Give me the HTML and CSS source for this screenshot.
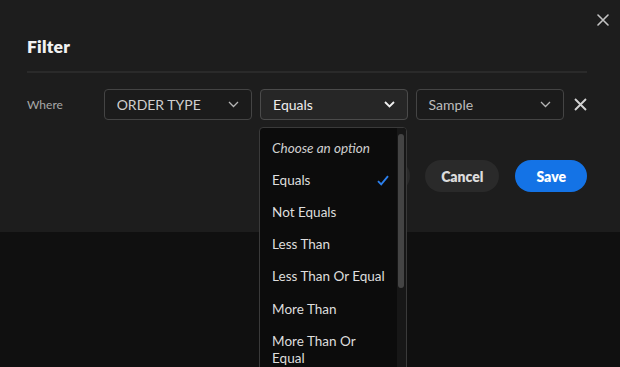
FILE: index.html
```html
<!DOCTYPE html>
<html lang="en">

<head>
    <meta charset="UTF-8">
    <title>Filter</title>
    <link rel="stylesheet" href="styles.css">
</head>

<body>
    <div class="modal">
        <button class="close" aria-label="Close">
            <svg width="12" height="12" viewBox="0 0 12 12"><path d="M1 1L11 11M11 1L1 11" stroke="#c4c4c4" stroke-width="1.6" stroke-linecap="round"/></svg>
        </button>
        <h1>Filter</h1>
        <div class="rule"></div>

        <div class="row">
            <span class="where">Where</span>
            <div class="select">
                <span>ORDER TYPE</span>
                <svg class="chev" width="11" height="7" viewBox="0 0 11 7"><path d="M1 1L5.5 5.5L10 1" fill="none" stroke="#b5b5b5" stroke-width="1.3"/></svg>
            </div>
            <div class="select open">
                <span>Equals</span>
                <svg class="chev" width="11" height="7" viewBox="0 0 11 7"><path d="M1 1L5.5 5.5L10 1" fill="none" stroke="#f0f0f0" stroke-width="1.8"/></svg>
                <div class="menu">
                    <ul>
                        <li class="placeholder">Choose an option</li>
                        <li class="selected">Equals
                            <svg class="check" width="12" height="11" viewBox="0 0 12 11"><path d="M1 6.2L4.2 9.4L11 1.2" fill="none" stroke="#2b7fec" stroke-width="1.9"/></svg>
                        </li>
                        <li>Not Equals</li>
                        <li>Less Than</li>
                        <li>Less Than Or Equal</li>
                        <li>More Than</li>
                        <li>More Than Or Equal</li>
                    </ul>
                    <div class="track"><div class="thumb"></div></div>
                </div>
            </div>
            <div class="select">
                <span class="dim">Sample</span>
                <svg class="chev" width="11" height="7" viewBox="0 0 11 7"><path d="M1 1L5.5 5.5L10 1" fill="none" stroke="#b5b5b5" stroke-width="1.3"/></svg>
            </div>
            <button class="remove" aria-label="Remove">
                <svg width="13" height="13" viewBox="0 0 13 13"><path d="M1 1L12 12M12 1L1 12" stroke="#d2d2d2" stroke-width="1.9"/></svg>
            </button>
        </div>

        <div class="actions">
            <button class="btn ghost">Clear</button>
            <button class="btn">Cancel</button>
            <button class="btn primary">Save</button>
        </div>
    </div>
</body>

</html>
```

FILE: styles.css
```css
html,
body {
    height: 100%;
}

body {
    margin: 0;
    background: #101010;
    font-family: Lato, 'Noto Sans', sans-serif;
    color: #ddd;
}

button {
    font-family: inherit;
    border: none;
    background: none;
    padding: 0;
    cursor: pointer;
}

.modal {
    position: relative;
    background: #1d1d1d;
    height: 232px;
    box-sizing: border-box;
    padding: 35px 33px 0 27px;
}

.close {
    position: absolute;
    top: 14px;
    right: 11px;
    width: 12px;
    height: 12px;
    display: flex;
}

h1 {
    margin: 0;
    font-size: 17.5px;
    line-height: 24px;
    font-weight: 800;
    letter-spacing: 0.2px;
    color: #f2f2f2;
}

.rule {
    margin-top: 12px;
    height: 2px;
    background: #2a2a2a;
}

.row {
    display: flex;
    align-items: center;
    margin-top: 16px;
    height: 31px;
}

.where {
    width: 77px;
    font-size: 12px;
    color: #a8a8a8;
}

.select {
    position: relative;
    box-sizing: border-box;
    width: 149px;
    height: 31px;
    margin-right: 8px;
    border: 1px solid #444;
    border-radius: 4px;
    background: #1b1b1b;
    display: flex;
    align-items: center;
    justify-content: space-between;
    padding: 0 12px 0 12px;
    font-size: 14px;
    color: #cfcfcf;
}

.select.open {
    width: 148px;
    background: #262626;
    border-color: #4b4b4b;
    color: #eee;
}

.select .dim {
    color: #bdbdbd;
}

.remove {
    display: flex;
    margin-left: 2px;
}

.menu {
    position: absolute;
    top: 37px;
    left: -2px;
    width: 148px;
    height: 250px;
    box-sizing: border-box;
    border: 1px solid #3a3a3a;
    border-radius: 4px;
    background: #0c0c0c;
    overflow: hidden;
    z-index: 2;
}

.menu ul {
    list-style: none;
    margin: 0;
    padding: 4px 0 0 12px;
    width: 117px;
}

.menu li {
    position: relative;
    padding: 7.6px 0;
    line-height: 17px;
    font-size: 13.5px;
    color: #dedede;
}

.menu li.placeholder {
    font-style: italic;
    color: #cfcfcf;
}

.check {
    position: absolute;
    left: 105px;
    top: 11px;
}

.track {
    position: absolute;
    top: 0;
    right: 0;
    width: 9px;
    height: 100%;
    background: #171717;
}

.thumb {
    margin: 6px 0 0 1px;
    width: 6px;
    height: 154px;
    border-radius: 3px;
    background: #444;
}

.actions {
    display: flex;
    justify-content: flex-end;
    gap: 16px;
    margin-top: 40px;
}

.btn {
    height: 32px;
    padding: 0 16px;
    border-radius: 16px;
    background: #2a2a2a;
    color: #dcdcdc;
    font-size: 14px;
    font-weight: 800;
}

.btn.ghost {
    width: 70px;
    margin-right: -1px;
}

.btn.primary {
    background: #1473e6;
    color: #fff;
    padding: 0 21px;
}
```
